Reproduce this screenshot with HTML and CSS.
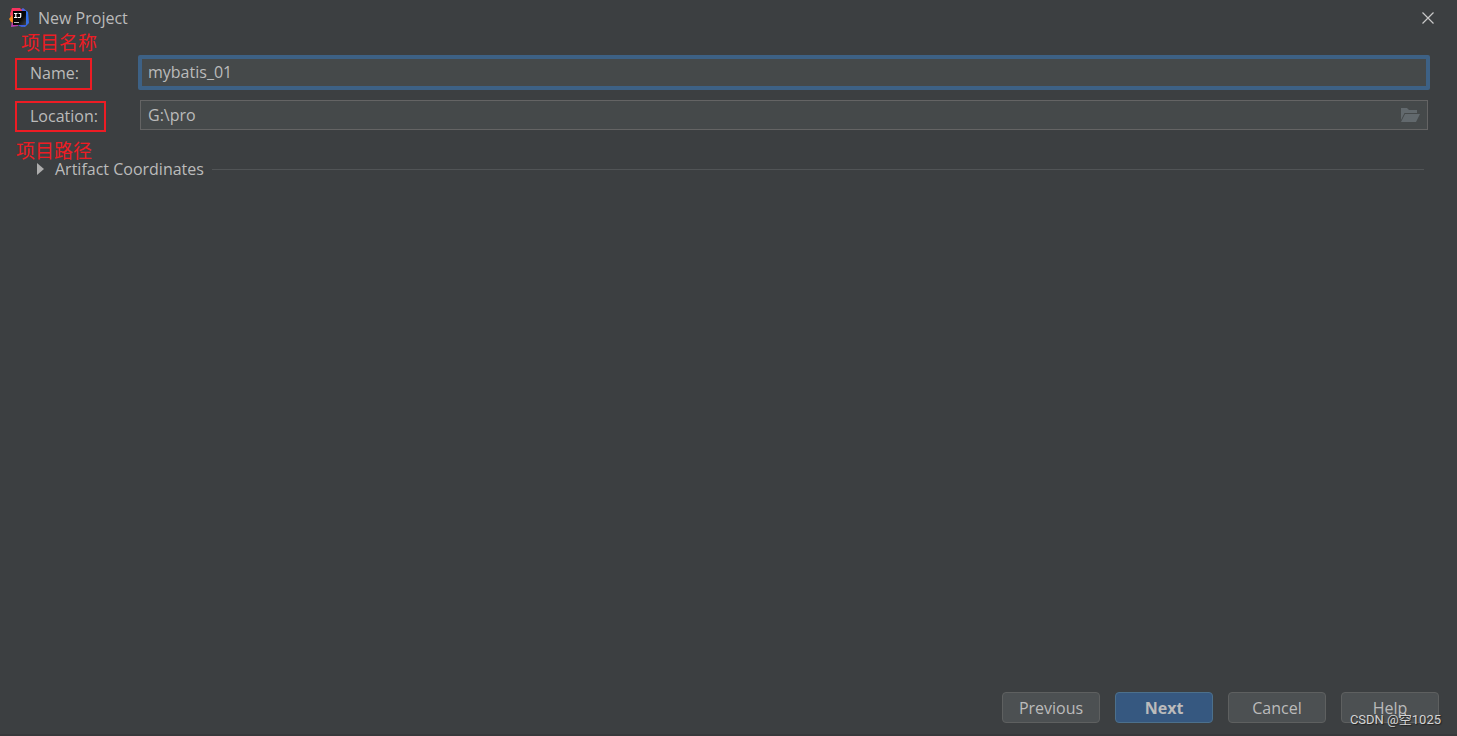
FILE: index.html
```html
<!DOCTYPE html>
<html lang="en">
<head>
<meta charset="utf-8">
<title>New Project</title>
<link rel="stylesheet" href="styles.css">
</head>
<body>
<div class="dialog">
  <header class="titlebar">
    <svg class="logo" viewBox="0 0 20 20" aria-hidden="true">
      <defs>
        <linearGradient id="blue" x1="0" y1="0" x2="1" y2="1"><stop offset="0" stop-color="#7c4fd0"/><stop offset=".5" stop-color="#2f74ee"/><stop offset="1" stop-color="#3867dc"/></linearGradient>
        <linearGradient id="pink" x1="0" y1="0" x2="0" y2="1"><stop offset="0" stop-color="#f8305f"/><stop offset=".45" stop-color="#ef4058"/><stop offset="1" stop-color="#b13bbd"/></linearGradient>
        <linearGradient id="ink" x1="0" y1="0" x2="1" y2="1"><stop offset="0" stop-color="#000"/><stop offset=".6" stop-color="#080808"/><stop offset="1" stop-color="#444"/></linearGradient>
      </defs>
      <path d="M10 3 14 0l5 4 1 11-4 4-6-1z" fill="url(#blue)"/>
      <path d="M3 0h8l3 4-5 14-7 1 1-6-2-7z" fill="url(#pink)"/>
      <path d="M0 11l3-4 2 8-3-1z" fill="#f68b1e"/>
      <path d="M9 17l4 2 5-2z" fill="#3f5de0"/>
      <path d="M4 3h13v14H4z" fill="url(#ink)"/>
      <path d="M5 5.500h3.500M6.800 5v4.500M5 9.500h3.500M9.500 5.500H12M11.700 5v3.500q0 1-1 1H9" fill="none" stroke="#fff" stroke-width="1.200"/>
      <path d="M5 14h5v1H5z" fill="#bbb"/>
    </svg>
    <h1 class="title">New Project</h1>
    <button class="close" type="button" aria-label="Close">
      <svg viewBox="0 0 12 12" aria-hidden="true"><path d="M.5.5l11 11M11.500.5l-11 11"/></svg>
    </button>
  </header>
  <form class="form">
    <div class="row">
      <label class="label label-name" for="name">Name:</label>
      <span class="note note-above">项目名称</span>
      <div class="field field-active"><input id="name" class="input" type="text" value="mybatis_01"></div>
    </div>
    <div class="row">
      <label class="label" for="location">Location:</label>
      <span class="note note-below">项目路径</span>
      <div class="field">
        <input id="location" class="input" type="text" value="G:\pro">
        <button class="browse" type="button" aria-label="Browse">
          <svg viewBox="0 0 20 16" aria-hidden="true"><path d="M1 1h6l2 2h8v3H4.500L1 13z"/><path d="M5 7h15l-4 8H1z"/></svg>
        </button>
      </div>
    </div>
    <div class="section">
      <button class="expander" type="button" aria-expanded="false">
        <svg viewBox="0 0 7 12" aria-hidden="true"><path d="M0 0l7 6-7 6z"/></svg>
        Artifact Coordinates
      </button>
      <span class="rule"></span>
    </div>
  </form>
  <footer class="actions">
    <button class="button" type="button">Previous</button>
    <button class="button primary" type="button">Next</button>
    <button class="button" type="button">Cancel</button>
    <button class="button" type="button">Help</button>
  </footer>
  <span class="watermark">CSDN @空1025</span>
</div>
</body>
</html>
```
FILE: styles.css
```css
* { box-sizing: border-box; }

body {
  margin: 0;
  background: #3c3f41;
  color: #bbbbbb;
  font: 16px/22px "Open Sans", "Noto Sans CJK SC", sans-serif;
}

button, input { font: inherit; color: inherit; }
button { cursor: pointer; }
svg { display: block; }

.dialog {
  position: relative;
  display: flex;
  flex-direction: column;
  min-height: 100vh;
  border-bottom: 2px solid #37393b;
}

.titlebar {
  display: flex;
  align-items: center;
  height: 36px;
  padding: 0 17px 0 9px;
}
.logo { width: 20px; height: 20px; margin-right: 9px; }
.title { flex: 1; margin: 0; font-size: 16px; font-weight: 400; }
.close { padding: 6px; border: 0; background: none; }
.close svg { width: 12px; height: 12px; fill: none; stroke: #c8c8c8; stroke-width: 1.2; }

.form { flex: 1; padding: 19px 29px 0 15px; }
.row {
  position: relative;
  display: grid;
  grid-template-columns: 125px minmax(0, 1fr);
  align-items: start;
  margin-bottom: 10px;
}
.label {
  justify-self: start;
  margin-top: 1px;
  padding: 2px 6px 3px 13px;
  border: 2px solid #ed1c24;
}
.label-name { margin-top: 3px; padding: 2px 11px 4px 13px; }

.note {
  position: absolute;
  color: #ed1c24;
  font: 19px/24px "Noto Sans CJK SC", sans-serif;
  white-space: nowrap;
}
.note-above { left: 6px; top: -25px; }
.note-below { left: 1px; top: 38px; }

.field {
  display: flex;
  align-items: center;
  height: 30px;
  border: 1px solid #646464;
  background: #45494a;
}
.field-active {
  height: 35px;
  margin: 0 -2px;
  padding: 0 0 1px;
  border: 4px solid #3d6185;
  border-radius: 2px;
}
.input {
  flex: 1;
  min-width: 0;
  padding: 0 7px;
  border: 0;
  outline: 0;
  background: none;
}
.field-active .input { padding: 0 6px; }
.browse { padding: 0 7px; border: 0; background: none; }
.browse svg { width: 20px; height: 16px; fill: #62696d; }

.section { display: flex; align-items: center; margin: 26px 4px 0 22px; }
.expander {
  display: flex;
  align-items: center;
  gap: 11px;
  padding: 0;
  border: 0;
  background: none;
}
.expander svg { width: 7px; height: 12px; fill: #adadad; }
.rule { flex: 1; height: 1px; margin-left: 8px; background: #515456; }

.actions {
  display: flex;
  justify-content: flex-end;
  gap: 15px;
  padding: 0 18px 11px;
}
.button {
  width: 98px;
  height: 31px;
  padding: 0;
  border: 1px solid #5e6060;
  border-radius: 4px;
  background: #4c5052;
}
.primary { border-color: #4c708c; background: #365880; font-weight: 700; }

.watermark {
  position: absolute;
  right: 16px;
  bottom: 5px;
  color: #d4d4d4;
  font: 13px/18px Roboto, "Noto Sans CJK SC", sans-serif;
  text-shadow: 1px 1px 1px #222222;
  pointer-events: none;
}
```
